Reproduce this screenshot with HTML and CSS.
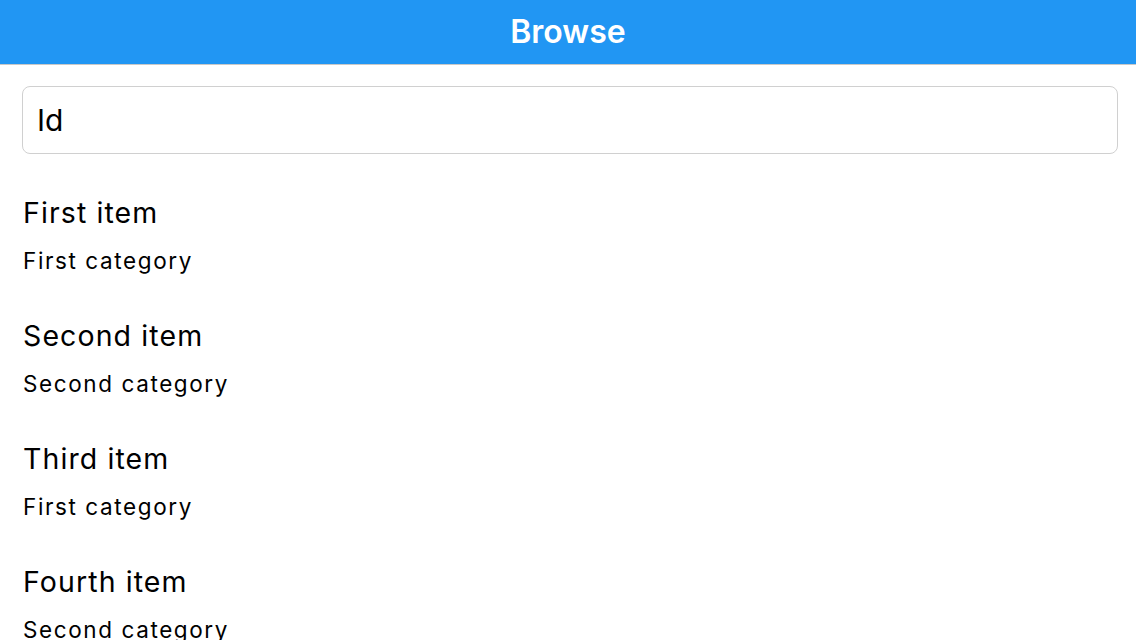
FILE: index.html
```html
<!DOCTYPE html>
<html lang="en">
<head>
    <meta charset="UTF-8">
    <meta name="viewport" content="width=device-width, initial-scale=1.0">
    <title>Browse</title>
    <link rel="stylesheet" href="styles.css">
</head>
<body>
    <div class="header">
        <h1>Browse</h1>
    </div>
    <div class="search">
        <input class="search-box" type="text" value="Id">
    </div>
    <div class="item-list">
        <div class="item">
            <div class="item-name">First item</div>
            <div class="item-category">First category</div>
        </div>
        <div class="item">
            <div class="item-name">Second item</div>
            <div class="item-category">Second category</div>
        </div>
        <div class="item">
            <div class="item-name">Third item</div>
            <div class="item-category">First category</div>
        </div>
        <div class="item">
            <div class="item-name">Fourth item</div>
            <div class="item-category">Second category</div>
        </div>
    </div>
</body>
</html>
```

FILE: styles.css
```css
* {
    margin: 0;
    padding: 0;
    box-sizing: border-box;
}

body {
    font-family: Inter, 'Noto Sans', sans-serif;
    background-color: white;
    color: black;
    height: 100vh;
    overflow: hidden;
}

.header {
    height: 65px;
    background-color: #2196F3;
    border-bottom: 1px solid #c8c8c8;
    display: flex;
    align-items: center;
    justify-content: center;
}

.header h1 {
    color: white;
    font-size: 32px;
    font-weight: 600;
    margin-top: -2px;
}

.search {
    padding: 21px 18px 0 22px;
}

.search-box {
    width: 100%;
    height: 68px;
    border: 1px solid #d0d0d0;
    border-radius: 8px;
    padding: 0 14px;
    font-family: inherit;
    font-size: 30px;
    color: black;
    outline: none;
}

.item-list {
    padding: 0 23px;
    margin-top: 42px;
}

.item {
    height: 123px;
}

.item-name {
    font-size: 28.5px;
    line-height: 34px;
    letter-spacing: 1.1px;
}

.item-category {
    font-size: 22.5px;
    line-height: 28px;
    letter-spacing: 1.6px;
    margin-top: 17px;
}
```
